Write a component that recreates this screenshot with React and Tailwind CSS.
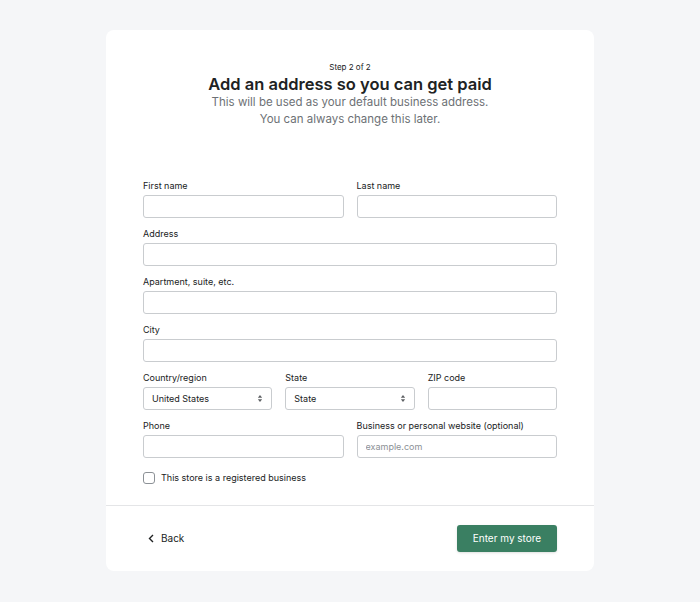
import { useState } from "react";

function Field({ label, className = "", children }) {
  return (
    <div className={className}>
      <label className="block text-[9px] leading-[14px] text-[#202223] mb-[2px]">{label}</label>
      {children}
    </div>
  );
}

const inputCls =
  "block w-full h-[23px] px-2 text-[9px] text-[#202223] bg-white border border-[#c9cccf] rounded-[3px] outline-none placeholder:text-[#8c9196]";

function SelectBox({ value }) {
  return (
    <div className="relative h-[23px] w-full bg-white border border-[#c9cccf] rounded-[3px] flex items-center px-2">
      <span className="text-[9px] text-[#202223]">{value}</span>
      <svg className="absolute right-[8px] top-[6px]" width="6" height="9" viewBox="0 0 7 10" fill="#5c5f62">
        <path d="M3.5 1 L6 4 H1 Z" />
        <path d="M3.5 9 L6 6 H1 Z" />
      </svg>
    </div>
  );
}

export default function App() {
  const [registered, setRegistered] = useState(false);

  return (
    <div className="min-h-screen bg-[#f5f6f8] pt-[30px] pb-[31px]" style={{ fontFamily: "Inter, 'Noto Sans', sans-serif" }}>
      <div className="mx-auto w-[488px] bg-white rounded-[8px]">
        <div className="px-[37px] pt-[31px] pb-[20px]">
          <div className="text-center">
            <p className="text-[8px] leading-[12px] text-[#202223]">Step 2 of 2</p>
            <h1 className="text-[16.5px] leading-[22px] font-semibold text-[#202223]">Add an address so you can get paid</h1>
            <p className="text-[11.5px] leading-[17px] text-[#6d7175] mt-[-1px]">
              This will be used as your default business address.
              <br />
              You can always change this later.
            </p>
          </div>

          <form className="mt-[51px] flex flex-col gap-[9px]">
            <div className="grid grid-cols-2 gap-[13px]">
              <Field label="First name">
                <input type="text" className={inputCls} />
              </Field>
              <Field label="Last name">
                <input type="text" className={inputCls} />
              </Field>
            </div>
            <Field label="Address">
              <input type="text" className={inputCls} />
            </Field>
            <Field label="Apartment, suite, etc.">
              <input type="text" className={inputCls} />
            </Field>
            <Field label="City">
              <input type="text" className={inputCls} />
            </Field>
            <div className="grid grid-cols-3 gap-[13px]">
              <Field label="Country/region">
                <SelectBox value="United States" />
              </Field>
              <Field label="State">
                <SelectBox value="State" />
              </Field>
              <Field label="ZIP code">
                <input type="text" className={inputCls} />
              </Field>
            </div>
            <div className="grid grid-cols-2 gap-[13px]">
              <Field label="Phone">
                <input type="text" className={inputCls} />
              </Field>
              <Field label="Business or personal website (optional)">
                <input type="text" placeholder="example.com" className={inputCls} />
              </Field>
            </div>
            <label className="flex items-center gap-[6px] mt-[4px] cursor-pointer">
              <span
                onClick={() => setRegistered(!registered)}
                className="w-[12px] h-[12px] border border-[#8c9196] rounded-[3px] bg-white flex items-center justify-center"
              >
                {registered && (
                  <svg width="8" height="8" viewBox="0 0 8 8" fill="none" stroke="#202223" strokeWidth="1.4">
                    <path d="M1 4 L3 6 L7 1.5" />
                  </svg>
                )}
              </span>
              <span className="text-[9px] leading-[14px] text-[#202223]">This store is a registered business</span>
            </label>
          </form>
        </div>

        <div className="border-t border-[#e4e5e7] px-[37px] pt-[19px] pb-[19px] flex items-center justify-between">
          <button className="flex items-center gap-[7px] pl-[5px] text-[10px] text-[#202223]">
            <svg width="6" height="9" viewBox="0 0 6 9" fill="none" stroke="#202223" strokeWidth="1.4">
              <path d="M5 1 L1.5 4.5 L5 8" />
            </svg>
            Back
          </button>
          <button className="w-[100px] h-[27px] bg-[#3a7f62] text-white text-[10px] rounded-[3px] shadow-sm">
            Enter my store
          </button>
        </div>
      </div>
    </div>
  );
}
